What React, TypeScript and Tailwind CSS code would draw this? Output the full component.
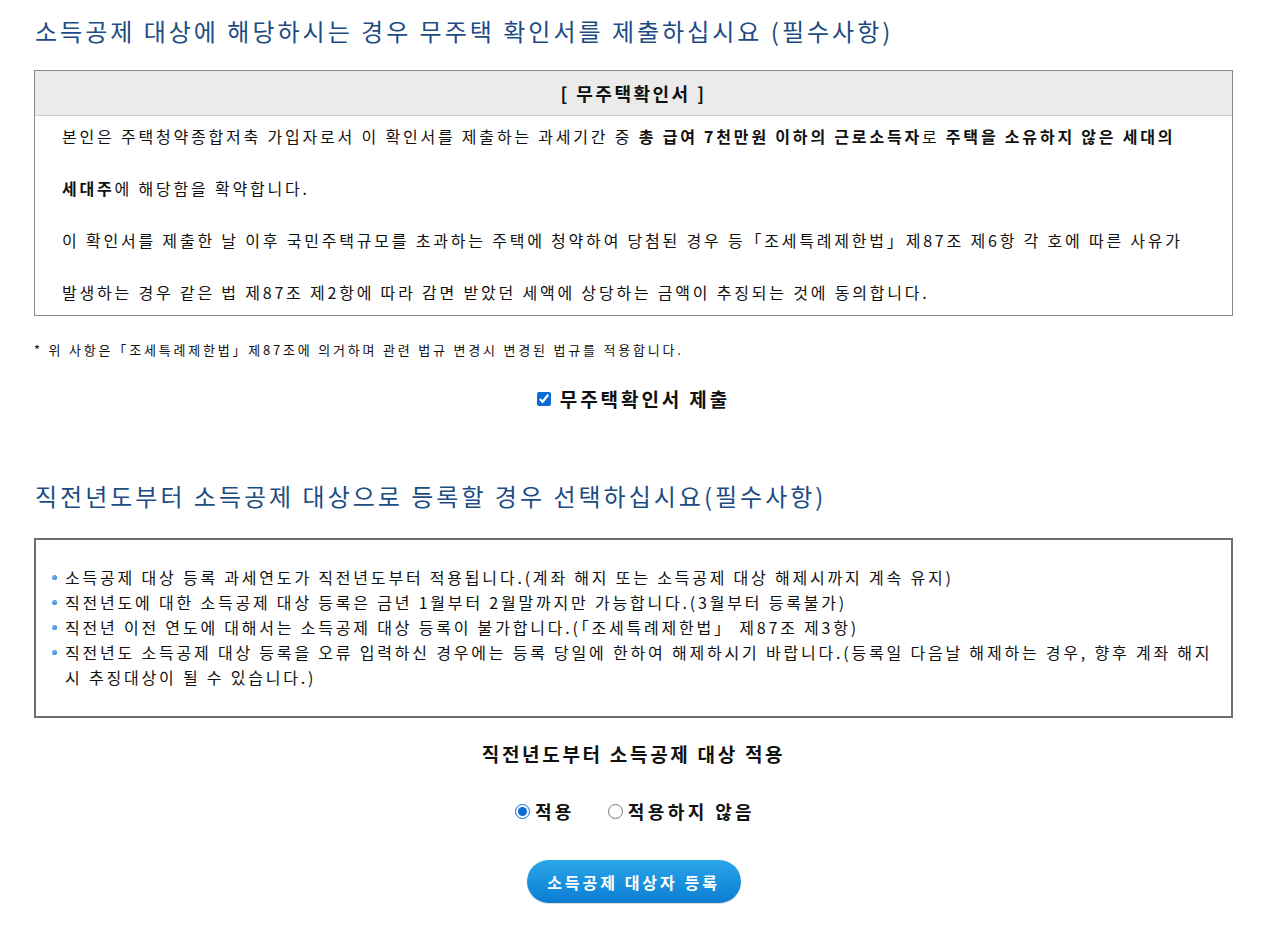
import { useState } from "react";

const FONT = { fontFamily: '"Noto Sans CJK KR", "Noto Sans", sans-serif' };

const notices = [
  "소득공제 대상 등록 과세연도가 직전년도부터 적용됩니다.(계좌 해지 또는 소득공제 대상 해제시까지 계속 유지)",
  "직전년도에 대한 소득공제 대상 등록은 금년 1월부터 2월말까지만 가능합니다.(3월부터 등록불가)",
  "직전년 이전 연도에 대해서는 소득공제 대상 등록이 불가합니다.(「조세특례제한법」 제87조 제3항)",
];

const App = () => {
  const [submitted, setSubmitted] = useState(true);
  const [apply, setApply] = useState<"yes" | "no">("yes");

  return (
    <div className="min-h-screen bg-white text-[#111] pl-[34px] pr-[47px] pt-[12px] pb-6" style={FONT}>
      {/* 무주택 확인서 */}
      <h2 className="text-[24px] leading-[38px] text-[#1d4c83] pl-px tracking-[3px]">
        소득공제 대상에 해당하시는 경우 무주택 확인서를 제출하십시요 (필수사항)
      </h2>

      <div className="mt-[20px] border border-[#8a8a8a]">
        <div className="h-[45px] bg-[#ebebeb] border-b border-[#d0d0d0] flex items-center justify-center text-[18px] font-bold tracking-[2.5px]">
          [ 무주택확인서 ]
        </div>
        <div className="pl-[27px] pr-4 pt-[7px] pb-[10px] text-[16px] leading-[26px] flex flex-col gap-[26px] tracking-[2.8px]">
          <p>
            본인은 주택청약종합저축 가입자로서 이 확인서를 제출하는 과세기간 중{" "}
            <b>총 급여 7천만원 이하의 근로소득자</b>로 <b>주택을 소유하지 않은 세대의</b>
          </p>
          <p>
            <b>세대주</b>에 해당함을 확약합니다.
          </p>
          <p>
            이 확인서를 제출한 날 이후 국민주택규모를 초과하는 주택에 청약하여 당첨된 경우 등「조세특례제한법」제87조 제6항 각 호에 따른 사유가
          </p>
          <p>발생하는 경우 같은 법 제87조 제2항에 따라 감면 받았던 세액에 상당하는 금액이 추징되는 것에 동의합니다.</p>
        </div>
      </div>

      <p className="mt-[24px] text-[13px] leading-[20px] tracking-[2.8px]">
        * 위 사항은「조세특례제한법」제87조에 의거하며 관련 법규 변경시 변경된 법규를 적용합니다.
      </p>

      <label className="mt-[27px] flex items-center justify-center gap-[9px] text-[19px] font-bold leading-[24px] tracking-[2.9px] cursor-pointer">
        <input
          type="checkbox"
          checked={submitted}
          onChange={(e) => setSubmitted(e.target.checked)}
          className="w-[14px] h-[14px] accent-[#0b6bd6]"
        />
        무주택확인서 제출
      </label>

      {/* 직전년도 등록 */}
      <h2 className="mt-[66px] text-[24px] leading-[38px] text-[#1d4c83] pl-px tracking-[3px]">
        직전년도부터 소득공제 대상으로 등록할 경우 선택하십시요(필수사항)
      </h2>

      <div className="mt-[23px] border-2 border-[#6e6e6e] pl-[16px] pt-[25px] pb-[26px] text-[16px] leading-[25px] tracking-[2.8px]">
        <ul>
          {notices.map((n) => (
            <li key={n} className="flex">
              <span className="w-[13px] shrink-0 flex items-center">
                <span className="w-[5px] h-[5px] rounded-full bg-[radial-gradient(circle_at_35%_35%,#7fb6f0,#1f6fd0)]" />
              </span>
              <span>{n}</span>
            </li>
          ))}
          <li className="flex">
            <span className="w-[13px] shrink-0 flex items-start pt-[10px]">
              <span className="w-[5px] h-[5px] rounded-full bg-[radial-gradient(circle_at_35%_35%,#7fb6f0,#1f6fd0)]" />
            </span>
            <span>
              직전년도 소득공제 대상 등록을 오류 입력하신 경우에는 등록 당일에 한하여 해제하시기 바랍니다.(등록일 다음날 해제하는 경우, 향후 계좌 해지
              <br />시 추징대상이 될 수 있습니다.)
            </span>
          </li>
        </ul>
      </div>

      <div className="mt-[22px] text-center text-[19px] font-bold leading-[28px] tracking-[2.7px]">
        직전년도부터 소득공제 대상 적용
      </div>

      <div className="mt-[30px] flex justify-center items-center gap-[30px] text-[18px] font-bold leading-[26px] tracking-[3.4px]">
        <label className="flex items-center gap-[2px] cursor-pointer">
          <input
            type="radio"
            name="apply"
            checked={apply === "yes"}
            onChange={() => setApply("yes")}
            className="w-[15px] h-[15px] accent-[#0b6bd6] m-[3px]"
          />
          적용
        </label>
        <label className="flex items-center gap-[2px] cursor-pointer">
          <input
            type="radio"
            name="apply"
            checked={apply === "no"}
            onChange={() => setApply("no")}
            className="w-[15px] h-[15px] accent-[#0b6bd6] m-[3px]"
          />
          적용하지 않음
        </label>
      </div>

      <div className="mt-[36px] flex justify-center">
        <button className="w-[214px] h-[43px] rounded-full bg-gradient-to-b from-[#2aa6ea] to-[#0a7dd2] text-white text-[16px] font-bold tracking-[3px] shadow-[0_1px_1px_rgba(0,0,0,0.15)]">
          소득공제 대상자 등록
        </button>
      </div>
    </div>
  );
};

export default App;
